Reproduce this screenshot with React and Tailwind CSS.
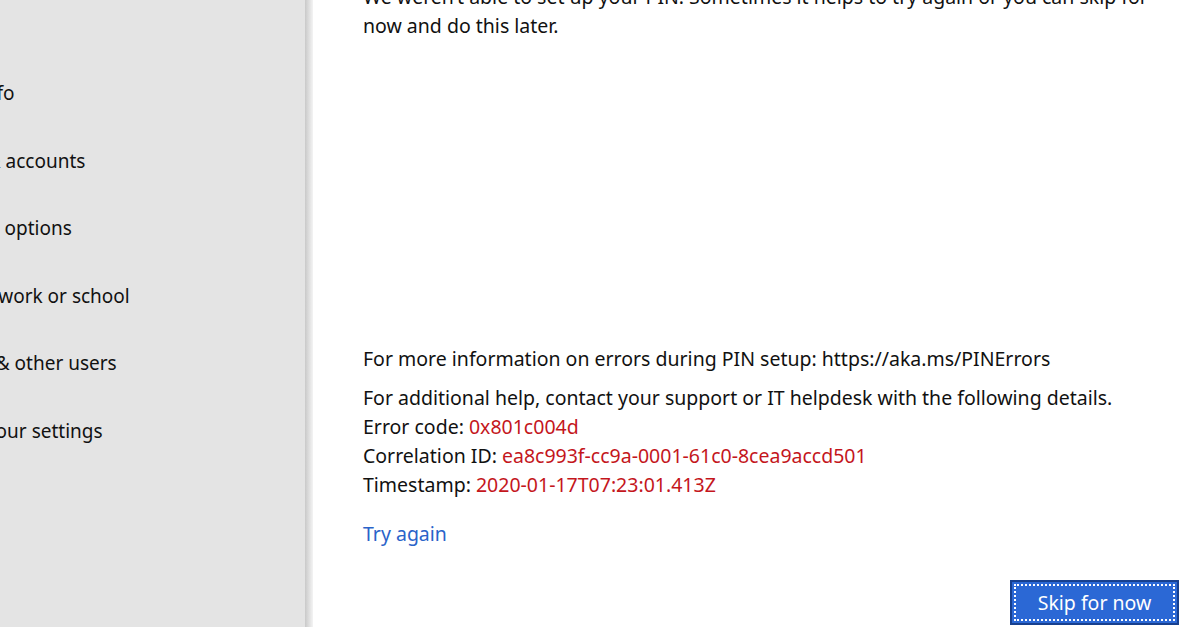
import React from 'react';

// Menú lateral de Configuración (recortado a la izquierda) + página de error del PIN
const ITEMS = [
  { label: 'Your info', ml: '-ml-[66px]' },
  { label: 'Email & accounts', ml: '-ml-[67px]' },
  { label: 'Sign-in options', ml: '-ml-[62px]' },
  { label: 'Access work or school', ml: '-ml-[66px]' },
  { label: 'Family & other users', ml: '-ml-[67px]' },
  { label: 'Sync your settings', ml: '-ml-[60px]' },
];

export default function App() {
  return (
    <div
      className="w-[1200px] h-[627px] flex overflow-hidden bg-white text-[#111]"
      style={{ fontFamily: '"Noto Sans", "Open Sans", "Liberation Sans", sans-serif' }}
    >
      <aside className="w-[305px] shrink-0 bg-[#e4e4e4] overflow-hidden pt-[76px]">
        {ITEMS.map((it) => (
          <div key={it.label} className={`h-[67.6px] whitespace-nowrap text-[19px] leading-[34px] ${it.ml}`}>
            {it.label}
          </div>
        ))}
      </aside>
      <div className="w-[8px] shrink-0 bg-gradient-to-r from-[#c9c9c9] to-[#f4f4f4]" />

      <main className="flex-1 flex flex-col pl-[50px] text-[19.5px] leading-[29px]">
        <p className="-mt-[18px] w-[800px]">
          We weren’t able to set up your PIN. Sometimes it helps to try again or you can skip for now and do this later.
        </p>

        <p className="mt-[304px]">For more information on errors during PIN setup: https://aka.ms/PINErrors</p>

        <div className="mt-[10px]">
          <div>For additional help, contact your support or IT helpdesk with the following details.</div>
          <div>
            Error code: <span className="text-[#c4161c]">0x801c004d</span>
          </div>
          <div>
            Correlation ID: <span className="text-[#c4161c]">ea8c993f-cc9a-0001-61c0-8cea9accd501</span>
          </div>
          <div>
            Timestamp: <span className="text-[#c4161c]">2020-01-17T07:23:01.413Z</span>
          </div>
        </div>

        <a className="mt-[20px] text-[#2a63c9] w-fit">Try again</a>

        <div className="flex justify-end mt-[32px] pr-[21px]">
          <button
            type="button"
            className="w-[169px] h-[45px] bg-[#2b68d5] border-2 border-[#17408f] p-[2px] text-white text-[19.5px]"
          >
            <span className="flex items-center justify-center w-full h-full border-2 border-dotted border-white">
              Skip for now
            </span>
          </button>
        </div>
      </main>
    </div>
  );
}
